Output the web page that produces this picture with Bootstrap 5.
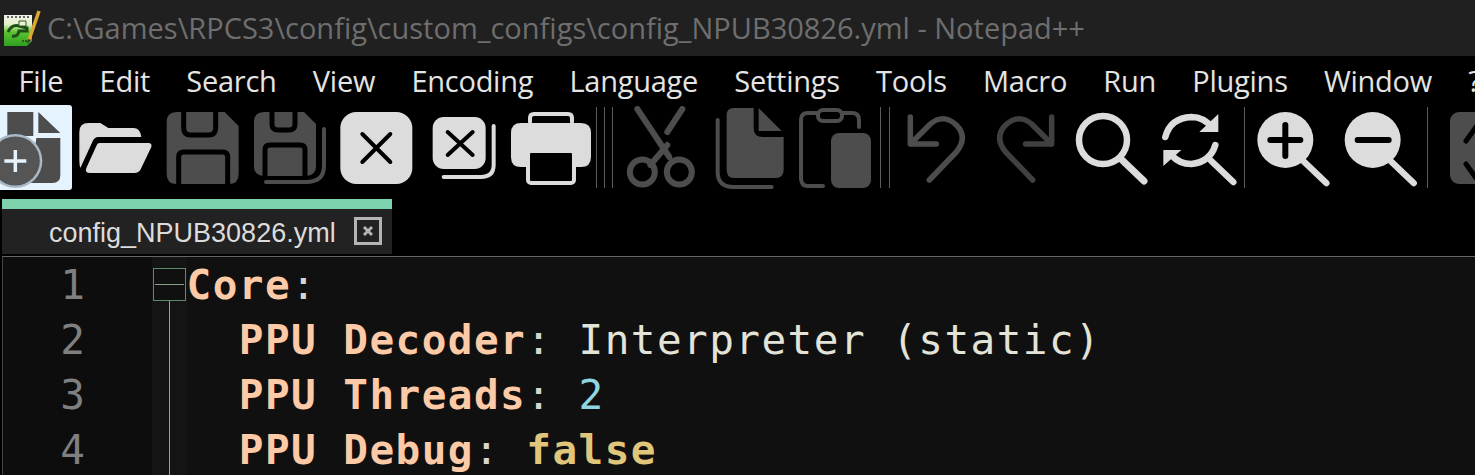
<!DOCTYPE html>
<html lang="en">
<head>
<meta charset="utf-8">
<title>Notepad++</title>
<link rel="stylesheet" href="https://cdn.jsdelivr.net/npm/bootstrap@5.3.0/dist/css/bootstrap.min.css">
<style>
html,body{margin:0;height:475px;overflow:hidden;background:#000}
.app-frame{width:1475px;height:475px;overflow:hidden;background:#000}
.win-title{height:56px;background:#202020;padding-left:3px;color:#6e6e6e;font:29px/56px "Open Sans",sans-serif;white-space:nowrap}
.win-title svg{flex:none;margin-right:4px}
.menu-row{height:49px;padding-left:18.5px;gap:36.2px;color:#e4e4e4;font:29px/50px "Open Sans",sans-serif;letter-spacing:-.25px;white-space:nowrap}
.tool-row{height:85px;margin-left:-14.33px}
.tool-cell{flex:none;width:86.67px;height:85px;display:block;filter:blur(.4px)}
.tool-cell.is-hot{background:#e5f3ff;border-radius:0 3px 3px 0;filter:none}
.tool-sep{flex:none;width:8.1px;height:85px}
.tool-sep.sep-wide{width:8.7px}
.tool-sep.sep-end{width:9.67px}
.tool-sep::after{content:"";display:block;width:1px;height:81px;background:#5a5a5a;margin:2px 0 0 3.5px}
.d{fill:#4d4d4d}.l{fill:#dcdcdc}
.sd,.sl,.sk{fill:none;stroke-linecap:round;stroke-linejoin:round}
.sd{stroke:#4d4d4d}.sl{stroke:#dcdcdc}.sk{stroke:#000}
.tab-strip{margin:9px 0 2px 2px;width:390px;height:55px;background:#222}
.tab-accent{height:10px;background:#7dd3ae}
.tab-body{height:45px;padding-left:47px;color:#dcdcdc;font:27px/49px "Liberation Sans",sans-serif;white-space:nowrap}
.tab-body svg{margin-left:18px;margin-top:-1px}
.edit-pane{margin-left:2px;height:219px;border-top:1px solid #666;border-left:1px solid #444;background:#101010;overflow:hidden}
.ln-col{flex:none;width:149px;background:#0d0d0d;color:#7f7f7f;text-align:right;padding-right:67px}
.fold-col{flex:none;width:34.5px;background:#141414;position:relative}
.code-row,.ln-col div{height:55px;font:41px/56px "DejaVu Sans Mono",monospace;letter-spacing:1.45px;white-space:pre}
.ln-col div{letter-spacing:0}
.k{color:#fccaa6;font-weight:700}.p{color:#d8d8d0}.s{color:#e3e3d8}.n{color:#8fd6e0}.b{color:#e0c67a;font-weight:700}
.fold-box{display:block;position:absolute;left:1px;top:11px}
</style>
</head>
<body>
<div class="app-frame d-flex flex-column">
  <div class="win-title d-flex align-items-center">
    <svg width="40" height="40" viewBox="3 9 40 40"><defs><linearGradient id="docg" x1="0" y1="0" x2="0" y2="1"><stop offset="0" stop-color="#f2f2ea"/><stop offset=".3" stop-color="#e4f0c8"/><stop offset=".55" stop-color="#5cc232"/><stop offset="1" stop-color="#2f9e22"/></linearGradient></defs><path d="M4 16H32V42L27 47H4Z" fill="url(#docg)"/><path d="M7 18H29" stroke="#666" stroke-width="2" stroke-dasharray="2 2"/><path d="M8 33q4-8 11-6l8 2v3h-8q-1 6-7 5" fill="none" stroke="#1f4d16" stroke-width="3"/><path d="M19 22h7v5h-7z" fill="#eef2dc" stroke="#2b5a1f"/><path d="M22 42h6" stroke="#2b5a1f" stroke-width="2" stroke-dasharray="2 1"/><path d="M29 41L39 12" stroke="#dba92c" stroke-width="3.5"/><path d="M27 45l1-5 3 1z" fill="#333"/></svg>
    <span>C:\Games\RPCS3\config\custom_configs\config_NPUB30826.yml - Notepad++</span>
  </div>
  <div class="menu-row d-flex">
    <span>File</span><span>Edit</span><span>Search</span><span>View</span><span>Encoding</span><span>Language</span><span>Settings</span><span>Tools</span><span>Macro</span><span>Run</span><span>Plugins</span><span>Window</span><span>?</span>
  </div>
  <div class="tool-row d-flex">
    <svg class="tool-cell is-hot" viewBox="-14.33 105 86.67 85"><path class="d" d="M7 112H33V136H7ZM38 112L60 133H38ZM36 138H60V175Q60 183 52 183H30Z"/><circle cx="15" cy="161" r="27" fill="#a9b9c6"/><circle cx="15" cy="161" r="24.5" fill="#555"/><path d="M15 150V172M4 161H26" stroke="#e5f3ff" stroke-width="3.5" fill="none"/></svg>
    <svg class="tool-cell" viewBox="71.67 105 86.67 85"><path class="l" d="M79 132Q79 123 88 123H100L108 128H133Q140 128 141 137H98Q94 137 92 142L80 168Q79 165 79 160Z"/><path class="l" d="M99 143H148Q152 143 151 147L140 170Q138 173 134 173H90Q84 173 86 168L96 146Q97 143 99 143Z"/></svg>
    <svg class="tool-cell" viewBox="158.33 105 86.67 85"><path class="d" d="M176 112H224L238 126V174Q238 184 228 184H176Q166 184 166 174V122Q166 112 176 112Z"/><path d="M183 108V128Q183 135 190 135H208Q215 135 215 128V108M178 188V157Q178 152 183 152H222Q227 152 227 157V188" fill="none" stroke="#000" stroke-width="5"/></svg>
    <svg class="tool-cell" viewBox="245 105 86.67 85"><path class="d" d="M263 112H303L315 124V166Q315 176 305 176H263Q253 176 253 166V122Q253 112 263 112Z"/><path d="M271 108V124Q271 130 277 130H288Q294 130 294 124V108M264 180V150Q264 145 269 145H299Q304 145 304 150V180" fill="none" stroke="#000" stroke-width="5"/><path class="sd" stroke-width="4" d="M323 129V166Q323 182 305 182H265"/></svg>
    <svg class="tool-cell" viewBox="331.67 105 86.67 85"><rect class="l" x="340" y="112" width="72" height="72" rx="16"/><path class="sk" stroke-width="4" d="M362 134L390 162M390 134L362 162"/></svg>
    <svg class="tool-cell" viewBox="418.33 105 86.67 85"><rect class="l" x="432" y="117" width="53" height="52" rx="11"/><path class="sk" stroke-width="4" d="M447 132L472 155M472 132L447 155"/><path class="sl" stroke-width="4" d="M493 126V165Q493 177 480 177H443"/></svg>
    <svg class="tool-cell" viewBox="505 105 86.67 85"><path class="l" d="M520 123H580Q590 123 590 133V157Q590 167 580 167H520Q510 167 510 157V133Q510 123 520 123Z"/><path class="sl" stroke-width="4" d="M529 122V118Q529 114 533 114H567Q571 114 571 118V122"/><rect x="527" y="151" width="46" height="32" rx="3" fill="#000" stroke="#dcdcdc" stroke-width="4"/></svg>
    <span class="tool-sep"></span><span class="tool-sep"></span><span class="tool-sep"></span>
    <svg class="tool-cell" viewBox="617.67 105 86.67 85"><g class="sd" stroke-width="6" stroke-linecap="butt"><path d="M638 109L670 157M683 109L668 132M668 145L651 165"/><circle cx="643" cy="172" r="12.5"/><circle cx="680" cy="172" r="12.5"/></g></svg>
    <svg class="tool-cell" viewBox="704.33 105 86.67 85"><path class="d" d="M735 108H755V128Q755 137 764 137H785V170Q785 178 777 178H735Q728 178 728 170V115Q728 108 735 108ZM760 108L783 131H760Z"/><path class="sd" stroke-width="4" d="M719 120V172Q719 187 735 187H773"/></svg>
    <svg class="tool-cell" viewBox="791 105 86.67 85"><path class="sd" stroke-width="4" d="M860 127V120Q860 113 853 113H809Q802 113 802 120V178Q802 186 809 186H824"/><rect x="819" y="110" width="24" height="11" rx="5" fill="#000" stroke="#4d4d4d" stroke-width="4"/><rect class="d" x="832" y="133" width="40" height="55" rx="8"/></svg>
    <span class="tool-sep sep-wide"></span><span class="tool-sep sep-wide"></span>
    <svg class="tool-cell" viewBox="895.67 105 86.67 85"><path class="sd" stroke-width="5.5" d="M912 117V144H938M912 144L932 124Q945 113 958 125Q970 137 958 152L931 180"/></svg>
    <svg class="tool-cell" viewBox="982.33 105 86.67 85"><path fill="none" stroke="#404040" stroke-width="5.5" stroke-linecap="round" stroke-linejoin="round" d="M1053 117V144H1027M1053 144L1033 124Q1020 113 1007 125Q995 137 1007 152L1034 180"/></svg>
    <svg class="tool-cell" viewBox="1069 105 86.67 85"><circle class="sl" cx="1105" cy="140" r="24" stroke-width="6.5"/><path class="sl" stroke-width="7" d="M1123 159L1146 181"/></svg>
    <svg class="tool-cell" viewBox="1155.67 105 86.67 85"><g class="sl" stroke-width="6.5" stroke-linecap="butt"><path d="M1167 137Q1172 118 1193 117Q1206 117 1214 128"/><path d="M1217 145Q1212 162 1193 164Q1181 164 1173 155"/></g><path class="l" d="M1220 114V132H1201ZM1165 150V166L1183 150Z"/><path class="sl" stroke-width="6.5" d="M1213 161L1235 182"/></svg>
    <span class="tool-sep sep-end"></span>
    <svg class="tool-cell" viewBox="1252.67 105 86.67 85"><circle class="l" cx="1288" cy="140" r="28"/><path class="sk" stroke-width="6" d="M1273 140H1303M1288 125V156"/><path class="sl" stroke-width="6.5" d="M1307 162L1329 183"/></svg>
    <svg class="tool-cell" viewBox="1339.33 105 86.67 85"><circle class="l" cx="1375" cy="140" r="28"/><path class="sk" stroke-width="6" d="M1360 140H1391"/><path class="sl" stroke-width="6.5" d="M1394 162L1416 183"/></svg>
    <span class="tool-sep"></span>
    <svg class="tool-cell" viewBox="1434 105 86.67 85"><rect class="d" x="1452" y="112" width="60" height="72" rx="9"/><path class="sk" stroke-width="5" d="M1478 127L1468 141M1468 164L1478 178"/></svg>
  </div>
  <div class="tab-strip">
    <div class="tab-accent"></div>
    <div class="tab-body d-flex">
      <span>config_NPUB30826.yml</span>
      <svg width="28" height="28" viewBox="0 0 28 28" class="align-self-center"><rect x="1.5" y="1.5" width="25" height="25" fill="none" stroke="#b4b4b4" stroke-width="3"/><path d="M10 10L18 18M18 10L10 18" stroke="#b4b4b4" stroke-width="3"/></svg>
    </div>
  </div>
  <div class="edit-pane d-flex">
    <div class="ln-col"><div>1</div><div>2</div><div>3</div><div>4</div></div>
    <div class="fold-col">
      <svg class="fold-box" width="34" height="208" viewBox="0 0 34 208"><rect x=".5" y=".5" width="32" height="32" fill="#101010" stroke="#5f8a6a"/><path d="M2 16.5H31" stroke="#7fa586"/><path d="M16.5 33V208" stroke="#8aa88e"/></svg>
    </div>
    <div class="code-col">
      <div class="code-row"><span class="k">Core</span><span class="p">:</span></div>
      <div class="code-row">  <span class="k">PPU Decoder</span><span class="p">: </span><span class="s">Interpreter (static)</span></div>
      <div class="code-row">  <span class="k">PPU Threads</span><span class="p">: </span><span class="n">2</span></div>
      <div class="code-row">  <span class="k">PPU Debug</span><span class="p">: </span><span class="b">false</span></div>
    </div>
  </div>
</div>
<script src="https://cdn.jsdelivr.net/npm/bootstrap@5.3.0/dist/js/bootstrap.bundle.min.js"></script>
</body>
</html>
